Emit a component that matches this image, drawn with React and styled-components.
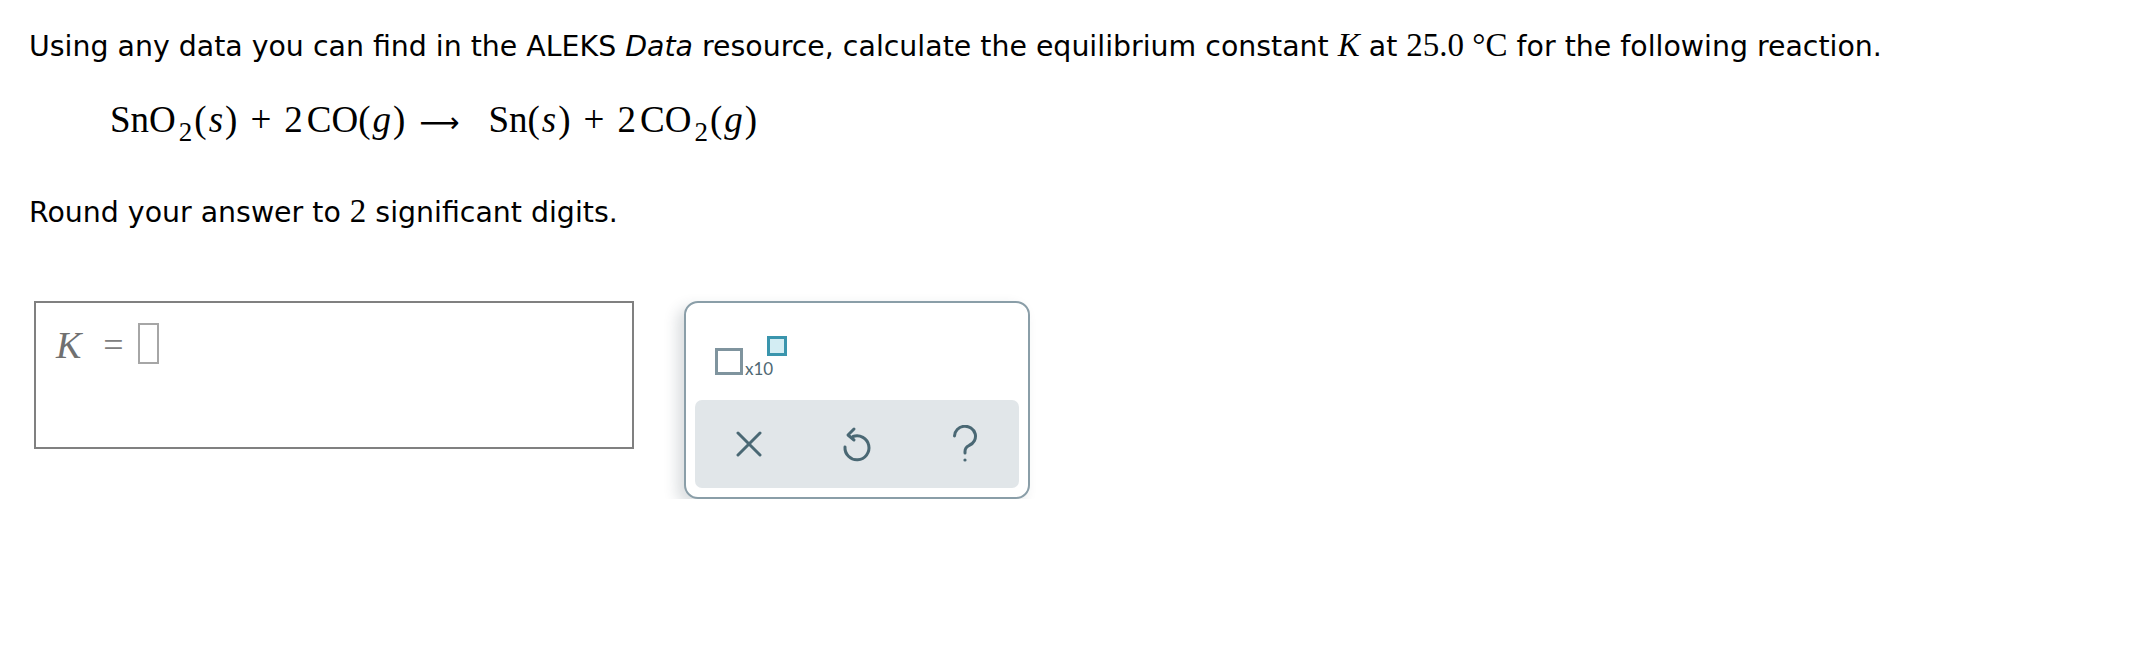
import React from 'react';
import styled, { createGlobalStyle } from 'styled-components';

const Global = createGlobalStyle`
  html, body {
    margin: 0;
    padding: 0;
    background: #fff;
  }
  body {
    font-family: "DejaVu Sans", Verdana, sans-serif;
    color: #000;
  }
`;

const Page = styled.div`
  padding: 27px 29px 0;
`;

const Line = styled.div`
  font-size: 28.4px;
  height: 40px;
  line-height: 40px;
  white-space: nowrap;
  margin-top: ${p => p.$top || 0}px;
`;

const Serif = styled.span`
  font-family: "Liberation Serif", "Times New Roman", serif;
  font-size: 33px;
  line-height: 30px;
  font-style: ${p => (p.$italic ? 'italic' : 'normal')};
`;

const Equation = styled.div`
  font-family: "Liberation Serif", "Times New Roman", serif;
  font-size: 37px;
  height: 44px;
  line-height: 44px;
  margin: 31px 0 0 81px;
  white-space: nowrap;
`;

const Sub = styled.sub`
  font-size: 27px;
  line-height: 20px;
  vertical-align: -9px;
  margin: 0 2px 0 3px;
`;

const It = styled.i`
  font-style: italic;
  margin: 0 ${p => p.$pad || 0}px;
`;

const Coef = styled.span`
  margin-right: 4px;
`;

const Op = styled.span`
  margin: 0 13px;
`;

const Arrow = styled.span`
  font-family: "DejaVu Sans", sans-serif;
  font-size: 28px;
  margin: 0 29px 0 14px;
`;

const Work = styled.div`
  display: flex;
  align-items: flex-start;
  gap: 50px;
  margin: 68px 0 0 5px;
`;

const AnswerBox = styled.div`
  width: 600px;
  height: 148px;
  border: 2px solid #808080;
  display: flex;
  align-items: flex-start;
  padding: 20px 0 0 20px;
  box-sizing: border-box;
`;

const MathVar = styled.span`
  font-family: "Liberation Serif", "Times New Roman", serif;
  font-style: italic;
  font-size: 38px;
  color: #707070;
  line-height: 44px;
`;

const Equals = styled.span`
  font-family: "Liberation Serif", "Times New Roman", serif;
  font-size: 36px;
  color: #808080;
  line-height: 44px;
  margin: 0 14px 0 22px;
`;

const Slot = styled.span`
  display: inline-block;
  width: 21px;
  height: 41px;
  box-sizing: border-box;
  border: 2px solid #a6a6a6;
  background: #fff;
`;

const Panel = styled.div`
  width: 346px;
  height: 198px;
  box-sizing: border-box;
  border: 2px solid #8a9ea8;
  border-radius: 14px;
  background: #fff;
  box-shadow: -7px 6px 14px rgba(40, 60, 70, 0.17);
  display: flex;
  flex-direction: column;
  padding: 0 9px 9px;
`;

const TemplateRow = styled.div`
  flex: 1;
  display: flex;
  align-items: flex-start;
  padding: 33px 0 0 20px;
`;

const Template = styled.div`
  display: flex;
  align-items: flex-end;
  padding-top: 12px;
`;

const Base = styled.span`
  display: block;
  width: 28px;
  height: 27px;
  box-sizing: border-box;
  border: 3px solid #7f949e;
`;

const Times = styled.span`
  font-family: "Lato", "Open Sans", sans-serif;
  font-size: 17px;
  color: #4f6873;
  line-height: 17px;
  margin-left: 2px;
  margin-bottom: -2px;
`;

const Exponent = styled.span`
  display: block;
  width: 20px;
  height: 20px;
  box-sizing: border-box;
  border: 3px solid #3a95ad;
  background: #d3edf3;
  align-self: flex-start;
  margin: -12px 0 0 -6px;
`;

const Bar = styled.div`
  height: 88px;
  background: #e1e6e9;
  border-radius: 7px;
  display: grid;
  grid-template-columns: 1fr 1fr 1fr;
  align-items: center;
  justify-items: center;
`;

const Tool = styled.button`
  border: none;
  background: transparent;
  padding: 0;
  display: flex;
  align-items: center;
  justify-content: center;
  color: #4a6874;
  cursor: pointer;
`;

const Cross = () => (
  <svg width="26" height="26" viewBox="0 0 26 26" fill="none" stroke="currentColor" strokeWidth="3" strokeLinecap="round">
    <line x1="2" y1="2" x2="24" y2="24" />
    <line x1="24" y1="2" x2="2" y2="24" />
  </svg>
);

const Undo = () => (
  <svg width="30" height="36" viewBox="0 0 30 36" fill="none" stroke="currentColor" strokeWidth="3" strokeLinecap="round" strokeLinejoin="round">
    <path d="M11 10.5 A12 12 0 1 1 3 21" />
    <path d="M12 3 L6 9 L12 14" />
  </svg>
);

const Help = () => (
  <svg width="26" height="38" viewBox="0 0 26 38" fill="none" stroke="currentColor" strokeWidth="3" strokeLinecap="round">
    <path d="M2.5 11 A10.5 10 0 1 1 17 20.5 C14 22 13 23.5 13 26.5 V28" />
    <circle cx="13" cy="35" r="1.6" fill="currentColor" stroke="none" />
  </svg>
);

export default function App() {
  return (
    <Page>
      <Global />
      <Line>
        Using any data you can find in the ALEKS <It>Data</It> resource, calculate the equilibrium
        constant <Serif $italic>K</Serif> at <Serif>25.0 °C</Serif> for the following reaction.
      </Line>
      <Equation>
        SnO<Sub>2</Sub>(<It $pad={2}>s</It>)<Op>+</Op><Coef>2</Coef>CO(<It $pad={2}>g</It>)
        <Arrow>⟶</Arrow>Sn(<It $pad={2}>s</It>)<Op>+</Op><Coef>2</Coef>CO<Sub>2</Sub>(<It $pad={2}>g</It>)
      </Equation>
      <Line $top={51}>
        Round your answer to <Serif>2</Serif> significant digits.
      </Line>
      <Work>
        <AnswerBox>
          <MathVar>K</MathVar>
          <Equals>=</Equals>
          <Slot />
        </AnswerBox>
        <Panel>
          <TemplateRow>
            <Template>
              <Base />
              <Times>x10</Times>
              <Exponent />
            </Template>
          </TemplateRow>
          <Bar>
            <Tool aria-label="Clear"><Cross /></Tool>
            <Tool aria-label="Undo"><Undo /></Tool>
            <Tool aria-label="Help"><Help /></Tool>
          </Bar>
        </Panel>
      </Work>
    </Page>
  );
}
